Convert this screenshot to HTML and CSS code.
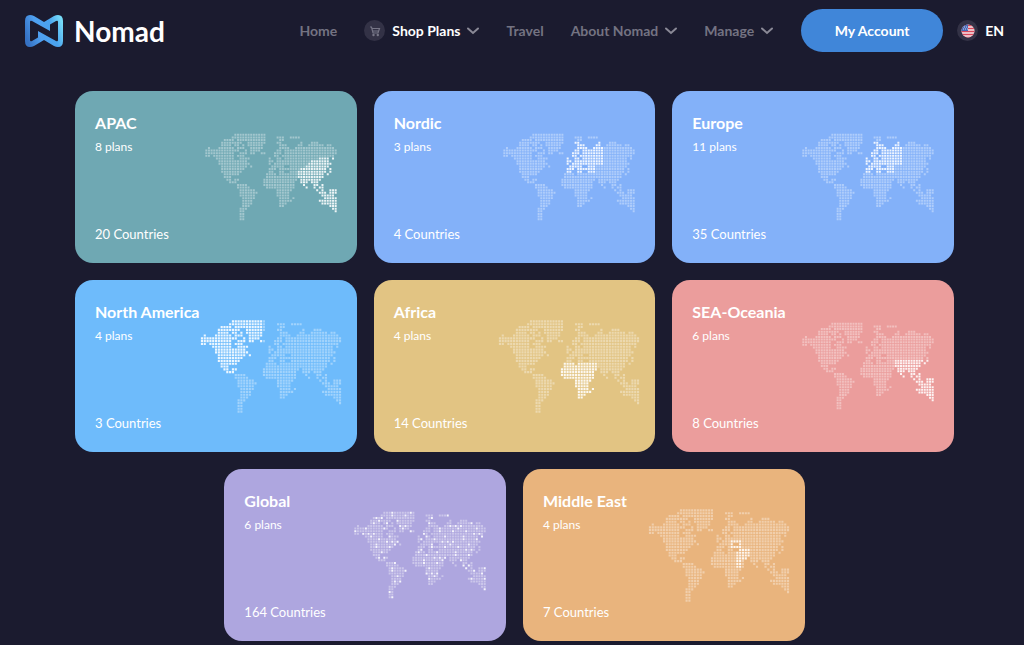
FILE: index.html
```html
<!DOCTYPE html>
<html lang="en">
<head>
<meta charset="utf-8">
<meta name="viewport" content="width=device-width, initial-scale=1">
<title>Nomad – Shop Plans</title>
<link rel="stylesheet" href="styles.css">
</head>
<body>
<header class="header">
  <a class="brand" href="#">
    <svg class="brand-mark" viewBox="0 0 40 34" aria-hidden="true">
      <defs>
        <linearGradient id="mark" x1="0" y1="0.6" x2="1" y2="0.3">
          <stop offset="0" stop-color="#3672c4"/>
          <stop offset="0.35" stop-color="#4fa0f0"/>
          <stop offset="0.7" stop-color="#4aa3ee"/>
          <stop offset="1" stop-color="#76dcf8"/>
        </linearGradient>
      </defs>
      <path fill="url(#mark)" fill-rule="evenodd" d="M1 7Q1 1 6 1Q8 1 10 2L20 8L30 2Q32 1 34 1Q39 1 39 7V27Q39 33 34 33Q32 33 30 32L20 26L10 32Q8 33 6 33Q1 33 1 27ZM6 8V26Q6 28 8 27L14 23.500V17L32 27Q34 28 34 26V8Q34 6 32 7L26 10.500V17L8 7Q6 6 6 8Z"/>
    </svg>
    <span class="brand-name">Nomad</span>
  </a>
  <nav class="nav" aria-label="Main">
    <a class="nav-link" href="#">Home</a>
    <button class="nav-link nav-active" type="button">
      <span class="round-icon">
        <svg viewBox="0 0 12 12" width="12" height="12" fill="none" stroke="#777687" stroke-width="1.200" aria-hidden="true"><path d="M1 2h1.500l1.500 6h5l1.500-4.500H3M4 6h6"/><circle cx="4.500" cy="10" r=".6"/><circle cx="8.800" cy="10" r=".6"/></svg>
      </span>
      Shop Plans
      <svg class="chevron" viewBox="0 0 12 8" aria-hidden="true"><path d="M1 1.500 6 6l5-4.500"/></svg>
    </button>
    <a class="nav-link" href="#">Travel</a>
    <button class="nav-link" type="button">About Nomad
      <svg class="chevron" viewBox="0 0 12 8" aria-hidden="true"><path d="M1 1.500 6 6l5-4.500"/></svg>
    </button>
    <button class="nav-link" type="button">Manage
      <svg class="chevron" viewBox="0 0 12 8" aria-hidden="true"><path d="M1 1.500 6 6l5-4.500"/></svg>
    </button>
  </nav>
  <button class="account" type="button">My Account</button>
  <button class="language" type="button">
    <span class="round-icon">
      <svg viewBox="0 0 14 14" width="14" height="14" aria-hidden="true">
        <clipPath id="disc"><circle cx="7" cy="7" r="6.500"/></clipPath>
        <g clip-path="url(#disc)"><path fill="#f3e4e8" d="M0 0h14v14H0z"/><path stroke="#d9485b" stroke-width="1.500" d="M0 1.500h14M0 4.500h14M0 7.500h14M0 10.500h14M0 13.500h14"/><path fill="#4869b5" d="M0 0h7v7H0z"/><path stroke="#c9d4f0" stroke-dasharray="1 1" d="M1 3h6M2 5h5"/></g>
      </svg>
    </span>
    EN
  </button>
</header>

<main class="plans">
  <a class="card teal" href="#"><h2>APAC</h2><p class="count">8 plans</p><p class="countries">20 Countries</p><svg class="map" data-region="apac" aria-hidden="true"></svg></a>
  <a class="card blue" href="#"><h2>Nordic</h2><p class="count">3 plans</p><p class="countries">4 Countries</p><svg class="map" data-region="europe" aria-hidden="true"></svg></a>
  <a class="card blue" href="#"><h2>Europe</h2><p class="count">11 plans</p><p class="countries">35 Countries</p><svg class="map" data-region="europe" aria-hidden="true"></svg></a>
  <a class="card sky" href="#"><h2>North America</h2><p class="count">4 plans</p><p class="countries">3 Countries</p><svg class="map map-large" data-region="america" aria-hidden="true"></svg></a>
  <a class="card sand" href="#"><h2>Africa</h2><p class="count">4 plans</p><p class="countries">14 Countries</p><svg class="map map-large" data-region="africa" aria-hidden="true"></svg></a>
  <a class="card coral" href="#"><h2>SEA-Oceania</h2><p class="count">6 plans</p><p class="countries">8 Countries</p><svg class="map" data-region="oceania" aria-hidden="true"></svg></a>
  <a class="card violet" href="#"><h2>Global</h2><p class="count">6 plans</p><p class="countries">164 Countries</p><svg class="map" data-region="global" aria-hidden="true"></svg></a>
  <a class="card orange" href="#"><h2>Middle East</h2><p class="count">4 plans</p><p class="countries">7 Countries</p><svg class="map map-large" data-region="mideast" aria-hidden="true"></svg></a>
</main>
<script src="maps.js"></script>
</body>
</html>
```
FILE: styles.css
```css
* { box-sizing: border-box; }

body {
  margin: 0;
  background: #1b1b2f;
  color: #fff;
  font-family: Lato, "Liberation Sans", sans-serif;
}

button {
  padding: 0;
  border: 0;
  background: none;
  color: inherit;
  font: inherit;
  cursor: pointer;
}

a { color: inherit; text-decoration: none; }

.header {
  display: flex;
  align-items: center;
  padding: 9px 20px 0 24px;
}

.brand { display: flex; align-items: center; gap: 10px; }
.brand-mark { width: 40px; height: 34px; }
.brand-name { font-size: 28px; font-weight: 700; line-height: 32px; }

.nav {
  display: flex;
  flex: 1;
  justify-content: flex-end;
  align-items: center;
  gap: 27px;
  margin-right: 28px;
}

.nav-link {
  display: flex;
  align-items: center;
  gap: 7px;
  color: #747382;
  font-size: 14px;
  font-weight: 700;
  line-height: 20px;
}

.nav-active { color: #fff; }

.chevron {
  width: 12px;
  height: 8px;
  fill: none;
  stroke: #8a8996;
  stroke-width: 2;
  stroke-linecap: round;
}

.round-icon {
  display: flex;
  align-items: center;
  justify-content: center;
  width: 21px;
  height: 21px;
  border-radius: 50%;
  background: #333246;
}

.account {
  width: 142px;
  height: 43px;
  border-radius: 22px;
  background: #4086d9;
  font-size: 14px;
  font-weight: 700;
}

.language {
  display: flex;
  align-items: center;
  gap: 7px;
  margin-left: 14px;
  font-size: 14px;
  font-weight: 700;
}

.plans {
  display: flex;
  flex-wrap: wrap;
  justify-content: center;
  gap: 17px;
  max-width: 1200px;
  margin: 0 auto;
  padding: 39px 70px 4px 75px;
}

.card {
  position: relative;
  display: flex;
  flex-direction: column;
  width: calc((100% - 34px) / 3);
  min-height: 172px;
  padding: 21px 20px 19px;
  border-radius: 18px;
}

.card h2 { margin: 0; font-size: 16px; line-height: 22px; font-weight: 700; }
.card p { margin: 0; }
.count { padding-top: 4px; font-size: 12px; line-height: 18px; }
.card .countries { margin-top: auto; font-size: 13px; line-height: 20px; }

.teal { background: #6fa8b3; }
.blue { background: #83b1f9; }
.sky { background: #6ebbfb; }
.sand { background: #e2c483; }
.coral { background: #eb9d9c; }
.violet { background: #aea6df; }
.orange { background: #e9b47d; }

.map {
  position: absolute;
  top: 42px;
  right: 20px;
  width: 132px;
  height: 88px;
}

.map-large {
  top: 40px;
  right: 15px;
  width: 142px;
  height: 93px;
}

.land { fill: #fff; opacity: 0.36; }
.lit { fill: #fff; opacity: 0.88; }
```
FILE: maps.js
```js
// Each row lists the land cells of a 50-column world grid as "start-end" runs.
const rows = [
  "11-22",
  "10-22 27-29 32-35",
  "7-10 12-14 15-22 28-29",
  "6-13 16-22 27-28 36-36 40-42",
  "6-9 11-12 14-14 16-21 28-30 35-36 39-44 46-47",
  "1-1 5-10 12-14 17-21 28-31 34-48",
  "0-12 15-15 17-20 27-28 30-49",
  "0-10 13-15 17-18 21-22 26-28 30-49",
  "0-1 3-10 12-14 26-27 29-48",
  "4-10 13-16 24-24 27-28 30-46 48-48",
  "5-15 24-25 27-46",
  "5-16 24-24 26-47",
  "6-15 17-17 25-29 32-46",
  "6-14 24-26 28-32 33-45 47-47",
  "6-13 24-25 28-29 32-45 47-47",
  "7-12 23-26 28-44 46-46",
  "7-9 23-34 35-44",
  "8-9 11-12 22-34 36-43",
  "9-11 22-33 36-38 40-42",
  "12-15 22-33 37-37 41-42 44-44",
  "12-16 23-33 38-38 41-41 43-44",
  "13-18 27-32 42-42 44-44 47-49",
  "13-19 27-31 43-45 47-49",
  "13-18 27-31 44-45 46-48",
  "14-18 28-31 33-33 45-49",
  "14-17 28-31 32-32 43-49",
  "14-17 28-30 44-49",
  "14-16 28-29 47-49",
  "13-15 48-49",
  "13-14 49-49",
  "13-14",
  "13-14",
  "13-14"
];

const chinaStart = { 9: 43, 10: 40, 11: 39, 12: 38, 13: 36 };

const regions = {
  apac: (x, y) => (y >= 9 && x >= (chinaStart[y] || 35)),
  europe: (x, y) => y >= 3 && y <= 14 && x >= 24 && x <= (y < 12 ? 37 : 34),
  america: (x, y) => x < 22 && y < 19,
  africa: (x, y) => y >= 15 && x >= 22 && x <= 34,
  oceania: (x, y) => y >= 14 && x >= 35,
  global: (x, y) => (x * 3 + y * 5 + (x * y) % 3) % 7 === 0,
  mideast: (x, y) =>
    (y >= 11 && y <= 13 && x >= 29 && x <= 32 && !(y === 12 && (x === 30 || x === 31))) ||
    (y >= 14 && y <= 17 && x >= 31 && x <= 35) ||
    (y >= 18 && y <= 20 && x >= 31 && x <= 32)
};

for (const map of document.querySelectorAll(".map")) {
  const isLit = regions[map.dataset.region];
  let land = "";
  let lit = "";
  rows.forEach((row, y) => {
    for (const run of row.split(" ")) {
      const [start, end] = run.split("-").map(Number);
      for (let x = start; x <= end; x++) {
        const dot = `M${x * 8 + 1} ${y * 8 + 1}h6v6h-6z`;
        if (isLit(x, y)) lit += dot;
        else land += dot;
      }
    }
  });
  map.setAttribute("viewBox", "0 0 400 264");
  map.innerHTML = `<path class="land" d="${land}"/><path class="lit" d="${lit}"/>`;
}
```
